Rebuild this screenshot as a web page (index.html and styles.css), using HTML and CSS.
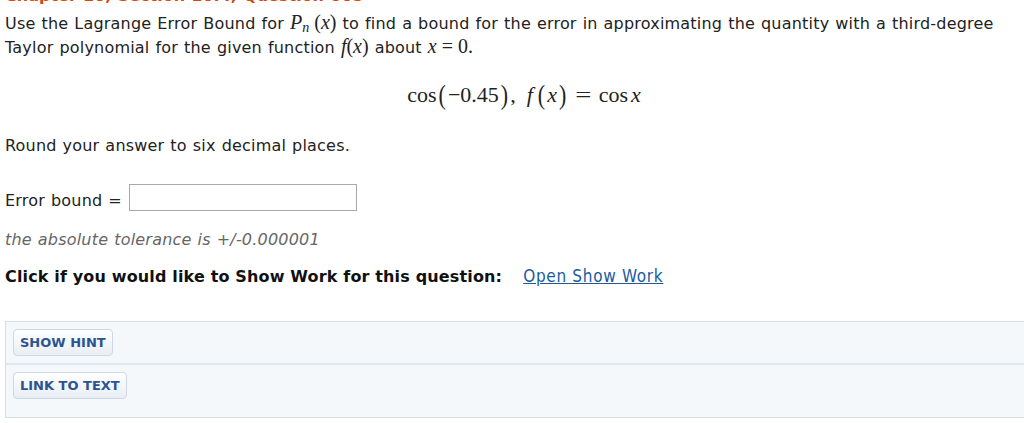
FILE: index.html
```html
<!DOCTYPE html>
<html>
<head>
<meta charset="utf-8">
<link rel="stylesheet" href="styles.css">
</head>
<body>
<div class="page">
  <h2 class="chapter">Chapter 10, Section 10.4, Question 005</h2>
  <p class="question">Use the Lagrange Error Bound for <span class="m"><i>P</i><sub><i>n</i></sub><span class="gap"></span>(<i>x</i>)</span> to find a bound for the error in approximating the quantity with a third-degree Taylor polynomial for the given function <span class="m"><i>f</i>(<i>x</i>)</span> about <span class="m"><i>x</i> = 0.</span></p>
  <div class="display"><span class="m big">cos<span class="paren">(</span>−0.45<span class="paren">)</span>,<span class="sp1"></span><i>f</i><span class="sp0"></span><span class="paren">(</span><i>x</i><span class="paren">)</span><span class="sp2"></span><span class="eq">=</span><span class="sp2"></span>cos<span class="sp0"></span><i>x</i></span></div>
  <p class="round">Round your answer to six decimal places.</p>
  <div class="answer">
    <label class="label">Error bound =</label>
    <input class="field" type="text">
  </div>
  <p class="tolerance">the absolute tolerance is +/-0.000001</p>
  <div class="showwork">
    <span class="sw-text">Click if you would like to Show Work for this question:</span>
    <a class="sw-link" href="#">Open Show Work</a>
  </div>
  <div class="panel">
    <div class="panel-row"><button class="btn">SHOW HINT</button></div>
    <div class="panel-row last"><button class="btn">LINK TO TEXT</button></div>
  </div>
</div>
</body>
</html>
```
FILE: styles.css
```css
html, body {
  margin: 0;
  padding: 0;
  background: #fff;
}
.page {
  padding-left: 5px;
  font-family: "DejaVu Sans", Verdana, sans-serif;
  font-size: 16px;
  letter-spacing: 0.2px;
  word-spacing: 0.7px;
  color: #222;
}
.chapter {
  margin: -14px 0 0 0;
  font-size: 16px;
  line-height: 20px;
  color: #d4480e;
  font-weight: bold;
  letter-spacing: 0;
}
.question {
  margin: 0;
  padding-top: 5px;
  line-height: 23px;
}
.m {
  font-family: "Liberation Serif", "Times New Roman", serif;
  font-size: 20px;
  letter-spacing: 0;
  word-spacing: 0;
}
.m sub {
  font-size: 14px;
  vertical-align: -3px;
  line-height: 0;
}
.gap {
  display: inline-block;
  width: 5px;
}
.display {
  text-align: center;
  margin-top: 21px;
  padding-left: 19px;
  height: 30px;
  line-height: 30px;
}
.display .big {
  font-size: 22px;
}
.paren {
  display: inline-block;
  transform: scaleY(1.25);
  margin: 0 2px;
}
.eq {
  display: inline-block;
  transform: scaleX(1.3);
}
.sp0 { display: inline-block; width: 3px; }
.sp1 { display: inline-block; width: 11px; }
.sp2 { display: inline-block; width: 9px; }
.round {
  margin: 26px 0 0 0;
  line-height: 20px;
}
.answer {
  display: flex;
  align-items: flex-end;
  margin-top: 28px;
}
.label {
  margin-right: 7px;
  line-height: 20px;
}
.field {
  width: 228px;
  height: 27px;
  box-sizing: border-box;
  border: 1px solid #a9a9a9;
  margin: 0;
  padding: 0;
}
.tolerance {
  margin: 19px 0 0 0;
  font-style: italic;
  color: #666;
  line-height: 20px;
}
.showwork {
  margin-top: 16px;
  display: flex;
  align-items: baseline;
  line-height: 20px;
}
.sw-text {
  font-weight: bold;
  color: #111;
  font-size: 16px;
  letter-spacing: 0.15px;
  word-spacing: 0;
}
.sw-link {
  margin-left: 21px;
  color: #1c5a9c;
  font-stretch: condensed;
  font-family: "DejaVu Sans Condensed", "DejaVu Sans", sans-serif;
  font-size: 17px;
  letter-spacing: 0.7px;
  word-spacing: 0;
}
.panel {
  margin-top: 34px;
  background: #f5f8fb;
  border: 1px solid #d5dce4;
  border-right: none;
  height: 97px;
  box-sizing: border-box;
}
.panel-row {
  padding: 7px 7px 7px 7px;
  border-bottom: 2px solid #e1e7ee;
}
.panel-row.last {
  border-bottom: none;
}
.btn {
  font-family: "DejaVu Sans", Verdana, sans-serif;
  font-weight: bold;
  font-size: 13px;
  letter-spacing: 0;
  word-spacing: 0;
  color: #2c5491;
  background: linear-gradient(#ffffff, #e9eef4);
  border: 1px solid #cfd8e2;
  border-radius: 4px;
  padding: 0 6px;
  height: 27px;
  margin: 0;
}
```
